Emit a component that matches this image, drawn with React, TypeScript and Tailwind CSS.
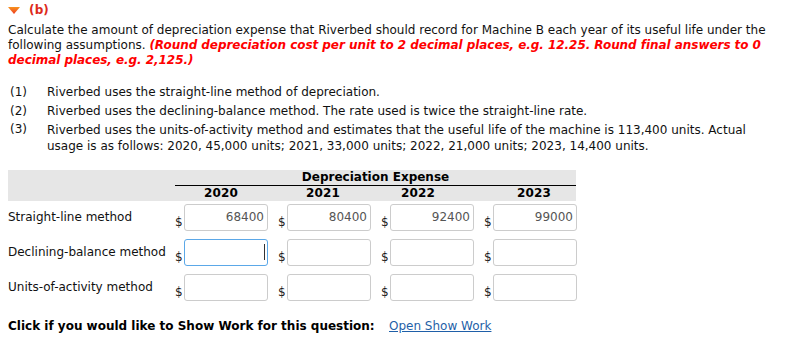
import React from "react";

const font = { fontFamily: '"DejaVu Sans", Verdana, sans-serif' };

function Cell({ value, focused }: { value?: string; focused?: boolean }) {
  return (
    <div className="flex items-end">
      <span className="w-[9px] text-[12px] leading-[15px] mb-[1px] text-[#1a1a1a]">$</span>
      <div className="relative">
        <input
          readOnly
          value={value ?? ""}
          className={`w-[84px] h-[27px] rounded-[3px] border bg-white pr-[3px] text-right text-[12px] text-[#555] outline-none ${
            focused ? "border-[#5ba8e8]" : "border-[#cccccc]"
          }`}
          style={font}
        />
        {focused && <span className="absolute right-[3px] top-[5px] h-[16px] w-[1px] bg-[#333]" />}
      </div>
    </div>
  );
}

function Row({ label, values, focusFirst }: { label: string; values?: string[]; focusFirst?: boolean }) {
  return (
    <div className="flex items-center h-[27px]">
      <div className="w-[167px] shrink-0 whitespace-nowrap text-[12px] leading-[15px] text-[#111]">{label}</div>
      <div className="flex gap-[10px]">
        {[0, 1, 2, 3].map((i) => (
          <Cell key={i} value={values?.[i]} focused={focusFirst && i === 0} />
        ))}
      </div>
    </div>
  );
}

export default function App() {
  return (
    <div className="w-[785px] h-[339px] overflow-hidden bg-white pl-[8px] pt-[3px] text-[#111] text-[12px]" style={font}>
      <div className="flex items-center gap-[9px] h-[15px]">
        <svg width="12" height="8" viewBox="0 0 12 8">
          <defs>
            <linearGradient id="g" x1="0" y1="0" x2="0" y2="1">
              <stop offset="0" stopColor="#f7941d" />
              <stop offset="1" stopColor="#ee3a23" />
            </linearGradient>
          </defs>
          <polygon points="0,0 12,0 6,7" fill="url(#g)" />
        </svg>
        <span className="font-bold text-[#dd2a1b] leading-[15px] tracking-[0.15px]">(b)</span>
      </div>
      <p className="mt-[5px] leading-[15px] whitespace-nowrap">
        Calculate the amount of depreciation expense that Riverbed should record for Machine B each year of its useful life under the
        <br />
        following assumptions.{" "}
        <span className="font-bold italic text-[#ff0000] tracking-[-0.05px]">
          (Round depreciation cost per unit to 2 decimal places, e.g. 12.25. Round final answers to 0
          <br />
          decimal places, e.g. 2,125.)
        </span>
      </p>
      <div className="mt-[17px] flex flex-col gap-[3.5px] leading-[15px] whitespace-nowrap">
        <div className="flex">
          <span className="w-[39px] shrink-0 pl-[2px]">(1)</span>
          <span>Riverbed uses the straight-line method of depreciation.</span>
        </div>
        <div className="flex">
          <span className="w-[39px] shrink-0 pl-[2px]">(2)</span>
          <span>Riverbed uses the declining-balance method. The rate used is twice the straight-line rate.</span>
        </div>
        <div className="flex">
          <span className="w-[39px] shrink-0 pl-[2px]">(3)</span>
          <span className="leading-[16px] -mt-[0.5px]">
            Riverbed uses the units-of-activity method and estimates that the useful life of the machine is 113,400 units. Actual
            <br />
            usage is as follows: 2020, 45,000 units; 2021, 33,000 units; 2022, 21,000 units; 2023, 14,400 units.
          </span>
        </div>
      </div>
      <div className="mt-[16px] w-[568px] bg-[#e6e6e6] flex font-bold text-black">
        <div className="w-[167px]" />
        <div className="w-[401px]">
          <div className="h-[16px] leading-[15px] text-center border-b border-black">Depreciation Expense</div>
          <div className="h-[15px] leading-[15px] flex tracking-[0.15px]">
            <div className="w-[92px] text-center">2020</div>
            <div className="w-[112px] text-center">2021</div>
            <div className="w-[78px] text-center">2022</div>
            <div className="ml-[35px] w-[84px] text-center">2023</div>
          </div>
        </div>
      </div>
      <div className="mt-[3px] flex flex-col gap-[8px]">
        <Row label="Straight-line method" values={["68400", "80400", "92400", "99000"]} />
        <Row label="Declining-balance method" focusFirst />
        <Row label="Units-of-activity method" />
      </div>
      <div className="mt-[18px] flex items-center leading-[15px] whitespace-nowrap">
        <span className="font-bold text-black w-[381px] shrink-0">Click if you would like to Show Work for this question:</span>
        <a href="#" className="text-[#1f5fa8] underline">Open Show Work</a>
      </div>
    </div>
  );
}
